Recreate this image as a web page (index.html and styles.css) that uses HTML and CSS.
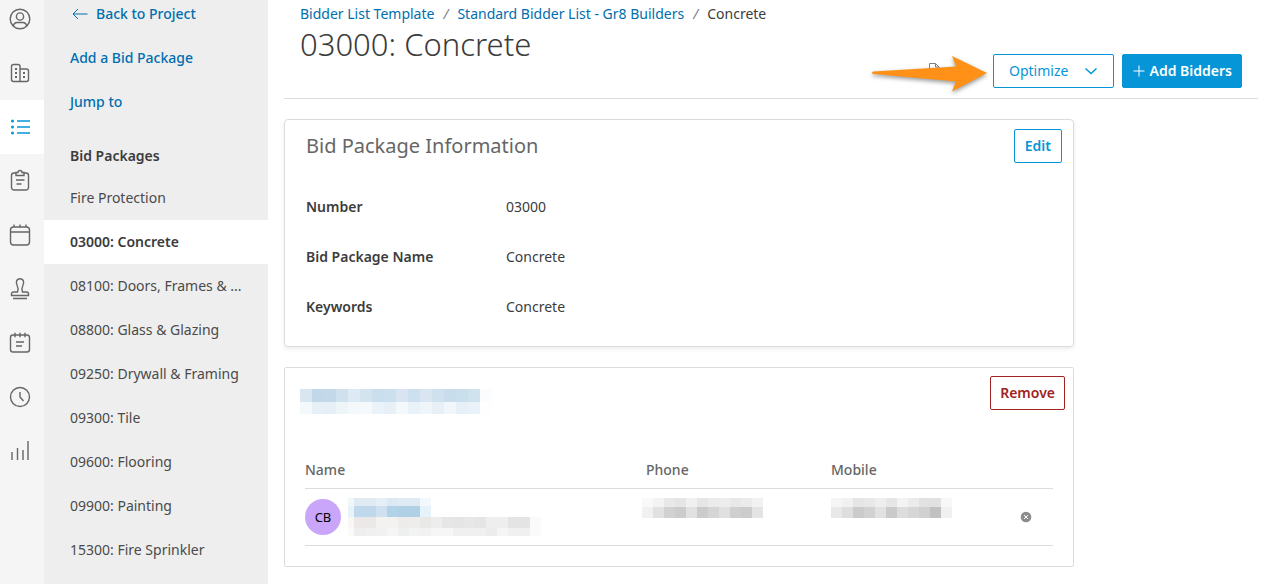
FILE: index.html
```html
<!DOCTYPE html>
<html lang="en">
<head>
  <meta charset="UTF-8">
  <meta name="viewport" content="width=device-width, initial-scale=1">
  <title>03000: Concrete</title>
  <link rel="stylesheet" href="styles.css">
</head>
<body>
  <nav class="rail" aria-label="Main">
    <a href="#" class="rail-first" aria-label="Account">
      <svg width="24" height="24" viewBox="0 0 24 24"><circle cx="12" cy="12" r="9.8"/><circle cx="12" cy="9.500" r="3.6"/><path d="M5.500 19c.3-2.400 1.800-3.500 3.700-3.500h5.600c1.900 0 3.400 1.100 3.700 3.500"/></svg>
    </a>
    <a href="#" aria-label="Companies">
      <svg width="24" height="24" viewBox="0 0 24 24"><path d="M12 20.500H5.500a2 2 0 0 1-2-2v-13a2 2 0 0 1 2-2H10a2 2 0 0 1 2 2zV8h6.500a2 2 0 0 1 2 2v8.500a2 2 0 0 1-2 2z"/><path class="dots" d="M7 7h2v2H7zM7 11h2v2H7zM7 15h2v2H7zM15 11h2v2h-2zM15 15h2v2h-2z"/></svg>
    </a>
    <a href="#" class="active" aria-label="Bidder lists">
      <svg width="24" height="24" viewBox="0 0 24 24"><path d="M9 6h13M9 12h13M9 18h13"/><g class="dots"><circle cx="4.500" cy="6" r="1.500"/><circle cx="4.500" cy="12" r="1.500"/><circle cx="4.500" cy="18" r="1.500"/></g></svg>
    </a>
    <a href="#" aria-label="Proposals">
      <svg width="24" height="24" viewBox="0 0 24 24"><path d="M8 4H6a2.500 2.500 0 0 0-2.500 2.500v12A2.500 2.500 0 0 0 6 21h12a2.500 2.500 0 0 0 2.500-2.500v-12A2.500 2.500 0 0 0 18 4h-2"/><path d="M8 3.500h2a2 2 0 0 1 4 0h2v3H8zM8 11h8.500M8.500 15h5"/></svg>
    </a>
    <a href="#" aria-label="Calendar">
      <svg width="24" height="24" viewBox="0 0 24 24"><rect x="2.500" y="4" width="19" height="18" rx="3"/><path d="M2.500 9h19M6 1.500V4M12 1.500V4M18 1.500V4"/></svg>
    </a>
    <a href="#" aria-label="Qualification">
      <svg width="24" height="24" viewBox="0 0 24 24"><path d="M9.500 15c.9-3 .7-4.500-.2-6C7.300 5.500 8.500 1.800 12 1.800s4.700 3.700 2.700 7.200c-.9 1.500-1.100 3-.2 6h4a2 2 0 0 1 2 2v1.500h-17V17a2 2 0 0 1 2-2zM5 21.500h14"/></svg>
    </a>
    <a href="#" aria-label="Notes">
      <svg width="24" height="24" viewBox="0 0 24 24"><rect x="2.500" y="4" width="19" height="17" rx="2.500"/><path d="M7 1.800v4.500M12 1.800v4.500M17 1.800v4.500M8 11h8M8 15h6"/></svg>
    </a>
    <a href="#" aria-label="History">
      <svg width="24" height="24" viewBox="0 0 24 24"><circle cx="12" cy="12" r="9.500"/><path d="M12 7v5l3.500 4"/></svg>
    </a>
    <a href="#" aria-label="Reports">
      <svg width="24" height="24" viewBox="0 0 24 24"><path d="M4 21v-8M9.500 21V9M15 21V11M20 21V2"/></svg>
    </a>
  </nav>

  <aside class="sidebar">
    <a href="#" class="item link back">
      <svg width="16" height="12" viewBox="0 0 16 12"><path d="M15.500 6H1M6 1L1 6l5 5"/></svg>
      Back to Project
    </a>
    <a href="#" class="item link">Add a Bid Package</a>
    <a href="#" class="item link">Jump to</a>
    <h2>Bid Packages</h2>
    <a href="#" class="item">Fire Protection</a>
    <a href="#" class="item current">03000: Concrete</a>
    <a href="#" class="item">08100: Doors, Frames &amp; ...</a>
    <a href="#" class="item">08800: Glass &amp; Glazing</a>
    <a href="#" class="item">09250: Drywall &amp; Framing</a>
    <a href="#" class="item">09300: Tile</a>
    <a href="#" class="item">09600: Flooring</a>
    <a href="#" class="item">09900: Painting</a>
    <a href="#" class="item">15300: Fire Sprinkler</a>
  </aside>

  <main>
    <header class="page-header">
      <div class="heading">
        <div class="breadcrumb">
          <a href="#">Bidder List Template</a><i>/</i><a href="#">Standard Bidder List - Gr8 Builders</a><i>/</i><span>Concrete</span>
        </div>
        <h1>03000: Concrete</h1>
      </div>
      <div class="actions">
        <button class="icon-button copy" aria-label="Copy">
          <svg width="14" height="18" viewBox="0 0 14 18"><path d="M2.500 13V1.500h6L12 5v8M8.500 1.500V5H12M1 13v3.500h10"/></svg>
        </button>
        <button class="btn optimize">
          Optimize
          <svg width="14" height="8" viewBox="0 0 14 8"><path d="M1.500 1.500L7 6.500l5.500-5"/></svg>
        </button>
        <button class="btn primary">
          <svg width="12" height="12" viewBox="0 0 12 12"><path d="M6 .5v11M.5 6h11"/></svg>
          Add Bidders
        </button>
        <svg class="arrow" width="118" height="42" viewBox="0 0 118 42"><path d="M2 19.500Q0 21 2 22L85 29.500 81 39.500 116 21 81 4l4 10.500L2 19.500z"/></svg>
      </div>
    </header>

    <section class="card info">
      <div class="card-head">
        <h2>Bid Package Information</h2>
        <button class="btn">Edit</button>
      </div>
      <dl>
        <dt>Number</dt><dd>03000</dd>
        <dt>Bid Package Name</dt><dd>Concrete</dd>
        <dt>Keywords</dt><dd>Concrete</dd>
      </dl>
    </section>

    <section class="card bidder">
      <div class="card-head">
        <svg class="mosaic" data-name="company"></svg>
        <button class="btn danger">Remove</button>
      </div>
      <table>
        <thead>
          <tr><th class="col-name">Name</th><th class="col-phone">Phone</th><th>Mobile</th><th class="col-remove"></th></tr>
        </thead>
        <tbody>
          <tr>
            <td>
              <div class="person">
                <span class="avatar">CB</span>
                <svg class="mosaic" data-name="person"></svg>
              </div>
            </td>
            <td class="number"><svg class="mosaic phone" data-name="phone"></svg></td>
            <td class="number"><svg class="mosaic" data-name="mobile"></svg></td>
            <td>
              <button class="icon-button" aria-label="Remove contact">
                <svg width="12" height="12" viewBox="0 0 12 12"><circle cx="6" cy="6" r="5.300"/><path d="M4 4l4 4M8 4L4 8"/></svg>
              </button>
            </td>
          </tr>
        </tbody>
      </table>
    </section>
  </main>

  <script src="mosaic.js"></script>
</body>
</html>
```

FILE: styles.css
```css
* {
  box-sizing: border-box;
}

body {
  background: #ffffff;
  color: #3c3c3c;
  display: flex;
  font-family: "Noto Sans", "Open Sans", sans-serif;
  font-size: 14px;
  line-height: 20px;
  margin: 0;
  min-height: 100vh;
}

a {
  color: #006eaf;
  text-decoration: none;
}

svg {
  display: block;
  fill: none;
  flex: none;
  stroke: currentColor;
}

h1, h2, dl, dd {
  font-weight: normal;
  margin: 0;
}

.rail {
  background: #f5f5f5;
  flex: none;
  width: 44px;
}

.rail a {
  align-items: center;
  color: #666666;
  display: flex;
  height: 54px;
  padding-left: 8px;
}

.rail .rail-first {
  height: 46px;
  padding-bottom: 8px;
}

.rail .active {
  background: #ffffff;
  color: #0696d7;
}

.rail svg {
  stroke-width: 1.4;
}

.rail .dots {
  fill: currentColor;
  stroke: none;
}

.sidebar {
  background: #eeeeee;
  flex: none;
  width: 224px;
}

.item {
  color: #4a4a4a;
  display: block;
  line-height: 44px;
  padding: 0 26px;
  white-space: nowrap;
}

.item.link {
  color: #006eaf;
  font-weight: 500;
}

.item.back {
  align-items: center;
  display: flex;
  gap: 8px;
  line-height: 28px;
  padding-bottom: 8px;
  padding-left: 28px;
}

.item.current {
  background: #ffffff;
  color: #3c3c3c;
  font-weight: 600;
}

.sidebar h2 {
  font-size: 14px;
  font-weight: 600;
  line-height: 40px;
  margin-top: 12px;
  padding: 0 26px;
}

main {
  flex: 1;
  min-width: 0;
  padding: 0 14px 16px 16px;
}

.page-header {
  align-items: flex-end;
  border-bottom: 1px solid #dcdcdc;
  display: flex;
  height: 99px;
  justify-content: space-between;
  padding: 4px 16px 10px;
}

.heading {
  align-self: flex-start;
}

.breadcrumb i {
  color: #808080;
  margin: 0 9px;
}

h1 {
  font-size: 31px;
  font-weight: 300;
  line-height: 40px;
}

.actions {
  align-items: center;
  display: flex;
  gap: 8px;
  position: relative;
}

.btn {
  background: #ffffff;
  border: 1px solid #0696d7;
  border-radius: 2px;
  color: #0696d7;
  cursor: pointer;
  font: 600 14px/20px "Noto Sans", "Open Sans", sans-serif;
  height: 34px;
  padding: 0 10px;
  white-space: nowrap;
}

.optimize {
  align-items: center;
  display: flex;
  font-weight: 400;
  justify-content: space-between;
  padding: 0 15px;
  width: 121px;
}

.optimize svg {
  stroke-width: 1.5;
}

.primary {
  align-items: center;
  background: #0696d7;
  color: #ffffff;
  display: flex;
  justify-content: space-between;
  padding: 0 9px 0 10px;
  width: 120px;
}

.danger {
  border-color: #a12222;
  color: #a12222;
  padding: 0 9px;
}

.icon-button {
  background: none;
  border: 0;
  color: #808080;
  cursor: pointer;
  display: block;
  padding: 0;
}

.copy {
  margin-right: 44px;
}

/* callout pointing at the Optimize button */
.arrow {
  filter: drop-shadow(0 2px 2px rgba(0, 0, 0, 0.4));
  position: absolute;
  right: 253px;
  top: -2px;
}

.arrow path {
  fill: #ff9119;
  stroke: none;
}

.card {
  border: 1px solid #dcdcdc;
  border-radius: 4px;
  margin-top: 20px;
  max-width: 790px;
}

.card-head {
  display: flex;
  justify-content: space-between;
}

.info {
  box-shadow: 0 2px 4px rgba(0, 0, 0, 0.08);
  padding: 9px 11px 14px 21px;
}

.info h2 {
  color: #666666;
  font-size: 20px;
  line-height: 34px;
}

dl {
  display: grid;
  grid-template-columns: 200px 1fr;
  line-height: 50px;
  margin-top: 19px;
}

dt {
  font-weight: 600;
}

.bidder {
  border-radius: 2px;
  padding: 8px 8px 20px 15px;
}

.bidder .card-head {
  align-items: flex-start;
}

.card-head .mosaic {
  margin-top: 13px;
}

table {
  border-collapse: collapse;
  margin: 38px 12px 0 5px;
  table-layout: fixed;
  width: calc(100% - 17px);
}

th {
  border-bottom: 1px solid #dcdcdc;
  color: #666666;
  font-weight: 500;
  height: 36px;
  padding: 0;
  text-align: left;
}

td {
  border-bottom: 1px solid #dcdcdc;
  height: 57px;
  padding: 0;
}

.col-name {
  width: 341px;
}

.col-phone {
  width: 185px;
}

.col-remove {
  width: 33px;
}

.person {
  align-items: center;
  display: flex;
  gap: 7px;
}

.avatar {
  background: #c9a6fa;
  border-radius: 50%;
  color: #000000;
  font-size: 13px;
  line-height: 36px;
  text-align: center;
  width: 36px;
}

.number {
  padding-top: 9px;
  vertical-align: top;
}

.phone {
  margin-left: -4px;
}

.mosaic {
  shape-rendering: crispEdges;
  stroke: none;
}

td .icon-button circle {
  fill: #8c8c8c;
  stroke: none;
}

td .icon-button path {
  stroke: #ffffff;
}
```

FILE: mosaic.js
```js
// hidden contact details: cell width, first cell width, row heights, colours
const mosaics = {
  company: {
    cell: 12, first: 12, heights: [13, 12],
    rows: [
      "d8e6f1 c2d8e9 c3d9ea cfe1ec dde9f3 d3e4ee cadfed ccdfed d8e5f1 cce0ef d9e5f1 cfe1ed c8dcec cadfec d1e2ef fafcfe",
      "f3f8fb e7eff7 e7eff6 edf5f9 f4f8fb f5f9fc eaf2fa e7f0f7 f3f8fb eaf2f9 f0f5fa e7eff7 f1f6fa e7eff8 e9f1f9 fefefe"
    ]
  },
  person: {
    cell: 11, first: 6, heights: [8, 11, 11, 8],
    rows: [
      "f0f7f8 e0eaf3 e0eaf3 e5eff5 dde9f2 dfeaf4 dfeaf4 f3f8fc",
      "e8f3f8 bfd8eb bfd8eb cfe1f0 b2d2e7 b0d0e6 b0d0e6 e7f3fa",
      "f7f8f3 ebe8e7 ebe9e7 f3f2f0 f3f2f0 edeceb efedeb e8e8e7 ededed e6e6e6 e5e5e5 e7e7e7 e5e5e5 eeeeee eeeeee e4e4e4 e4e4e4 fafafa",
      "fafaf8 eeeeee f0f0f0 f1f1f1 f5f5f5 eeefef f3f3f3 f1f1f1 f6f6f6 f6f6f6 f0f0f0 f0f0f0 f0f0f0 ececec f5f5f5 f0f0f0 f0f0f0 fafafa"
    ]
  },
  phone: {
    cell: 11, first: 11, heights: [9, 11],
    rows: [
      "f9f9f9 f3f3f3 e8e8e8 e5e5e5 f0f0f0 e6e6e6 ebebeb ededed e8e8e8 ebebeb f2f2f2",
      "f1f1f1 e1e1e1 d1d1d1 cccccc e1e1e1 cbcbcb d5d5d5 e0e0e0 cfcfcf cccccc e4e4e4"
    ]
  },
  mobile: {
    cell: 11, first: 11, heights: [9, 11],
    rows: [
      "f5f5f5 f1f1f1 e5e5e5 e8e8e8 eeeeee e6e6e6 f3f3f3 ebebeb e2e2e2 e1e1e1 f7f7f7",
      "e8e8e8 dedede cbcbcb d2d2d2 e1e1e1 cacaca dddddd d6d6d6 d0d0d0 c1c1c1 f0f0f0"
    ]
  }
};

document.querySelectorAll(".mosaic").forEach(svg => {
  const m = mosaics[svg.dataset.name];
  let y = 0;
  let width = 0;
  m.rows.forEach((row, r) => {
    let x = 0;
    row.split(" ").forEach((color, c) => {
      const w = c === 0 ? m.first : m.cell;
      const rect = document.createElementNS("http://www.w3.org/2000/svg", "rect");
      rect.setAttribute("x", x);
      rect.setAttribute("y", y);
      rect.setAttribute("width", w);
      rect.setAttribute("height", m.heights[r]);
      rect.setAttribute("fill", "#" + color);
      svg.appendChild(rect);
      x += w;
    });
    width = Math.max(width, x);
    y += m.heights[r];
  });
  svg.setAttribute("width", width);
  svg.setAttribute("height", y);
});
```
